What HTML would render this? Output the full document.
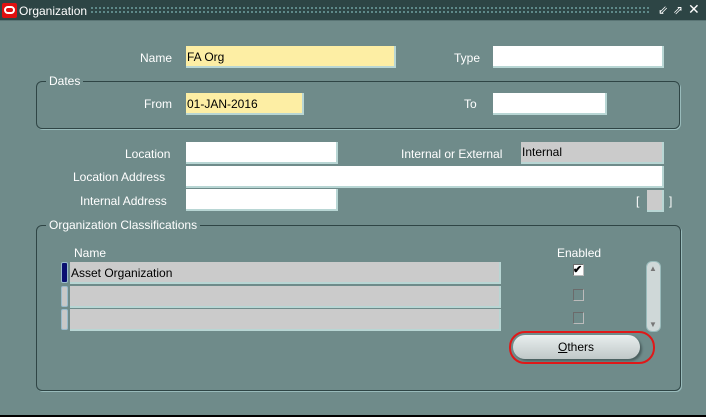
<!DOCTYPE html>
<html><head><style>
*{margin:0;padding:0;box-sizing:border-box}
body{width:706px;height:417px;background:#6f8b8a;position:relative;overflow:hidden;font-family:"Liberation Sans",sans-serif;font-size:12px;color:#fff}
.a{position:absolute}
.t{position:absolute;white-space:nowrap;line-height:14px}
.f{position:absolute;background:#fff;border-right:2px solid #b8d6d4;border-bottom:2px solid #b8d6d4;color:#000;padding:4px 1px 0;line-height:14px}
.y{background:#fdeea4}
.g{background:#cbcbcb}
.fr{position:absolute;border:1px solid #2f4545;border-radius:6px;box-shadow:1px 1px 0 #9bb}
.lg{position:absolute;background:#6f8b8a;padding:0 3px;line-height:14px;color:#fff}
.ind{position:absolute;width:7px;height:21px;background:#c8c8c8;border:1px solid #9bc;border-radius:2px}
.cb{position:absolute;width:11px;height:12px;border:1px solid #6b6b6b;border-right-color:#bbb;border-bottom-color:#bbb}
</style></head><body>
<div class="a" style="left:0;top:0;width:706px;height:20px;background:#2d4545"></div>
<div class="a" style="left:2px;top:3px;width:15px;height:15px;background:#e01010;border-radius:2px"></div>
<div class="a" style="left:4px;top:6px;width:11px;height:8px;border:2px solid #fff;border-radius:5px"></div>
<div class="t" style="left:19px;top:4px;font-size:12px">Organization</div>
<div class="a" style="left:90px;top:6px;width:560px;height:8px;background-image:radial-gradient(#6fa0a0 0.8px,transparent 1px);background-size:4px 4px"></div>
<div class="t" style="left:658px;top:3px;font-size:12px">⇙</div>
<div class="t" style="left:673px;top:3px;font-size:12px">⇗</div>
<div class="t" style="left:688px;top:2px;font-size:14px">✕</div>
<div class="a" style="left:0;top:20px;width:706px;height:1px;background:#5a7575"></div>

<div class="t" style="left:140px;top:51px">Name</div>
<div class="f y" style="left:186px;top:46px;width:210px;height:22px">FA Org</div>
<div class="t" style="left:454px;top:51px">Type</div>
<div class="f" style="left:493px;top:46px;width:171px;height:22px"></div>

<div class="fr" style="left:36px;top:81px;width:644px;height:48px"></div>
<div class="lg" style="left:46px;top:74px">Dates</div>
<div class="t" style="left:144px;top:97px">From</div>
<div class="f y" style="left:186px;top:93px;width:118px;height:22px">01-JAN-2016</div>
<div class="t" style="left:464px;top:97px">To</div>
<div class="f" style="left:493px;top:93px;width:114px;height:22px"></div>

<div class="t" style="left:125px;top:147px">Location</div>
<div class="f" style="left:186px;top:142px;width:152px;height:22px"></div>
<div class="t" style="left:401px;top:147px">Internal or External</div>
<div class="f g" style="left:521px;top:142px;width:143px;height:22px;padding-top:3px">Internal</div>
<div class="t" style="left:73px;top:170px">Location Address</div>
<div class="f" style="left:186px;top:166px;width:478px;height:22px"></div>
<div class="t" style="left:80px;top:194px">Internal Address</div>
<div class="f" style="left:186px;top:189px;width:152px;height:22px"></div>
<div class="t" style="left:636px;top:194px">[</div>
<div class="f g" style="left:647px;top:190px;width:17px;height:22px"></div>
<div class="t" style="left:669px;top:194px">]</div>

<div class="fr" style="left:36px;top:225px;width:645px;height:166px"></div>
<div class="lg" style="left:46px;top:218px">Organization Classifications</div>
<div class="t" style="left:74px;top:246px">Name</div>
<div class="t" style="left:557px;top:246px">Enabled</div>
<div class="ind" style="left:61px;top:262px;background:#0a1070;border-color:#9bc"></div>
<div class="f g" style="left:70px;top:262px;width:431px;height:22px">Asset Organization</div>
<div class="ind" style="left:61px;top:286px"></div>
<div class="f g" style="left:70px;top:286px;width:431px;height:22px"></div>
<div class="ind" style="left:61px;top:309px"></div>
<div class="f g" style="left:70px;top:309px;width:431px;height:22px"></div>
<div class="cb" style="left:573px;top:264px;background:#fff"></div>
<div class="t" style="left:573px;top:263px;color:#000;font-size:11px;font-weight:bold">✔</div>
<div class="cb" style="left:573px;top:289px"></div>
<div class="cb" style="left:573px;top:312px"></div>
<div class="a" style="left:646px;top:261px;width:15px;height:71px;background:#cfd8d8;border:1px solid #9bb;border-radius:6px"></div>
<div class="t" style="left:649px;top:262px;color:#777;font-size:8px">▲</div>
<div class="t" style="left:649px;top:318px;color:#777;font-size:8px">▼</div>

<div class="a" style="left:513px;top:335px;width:127px;height:24px;border-radius:12px;background:linear-gradient(#e8eeee,#c0c8c8);box-shadow:2px 2px 2px #4a5e5e"></div>
<div class="t" style="left:558px;top:340px;color:#000"><u>O</u>thers</div>
<div class="a" style="left:509px;top:331px;width:146px;height:33px;border:2px solid #e01818;border-radius:16px"></div>

<div class="a" style="left:0;top:415px;width:706px;height:2px;background:#000"></div>
</body></html>
